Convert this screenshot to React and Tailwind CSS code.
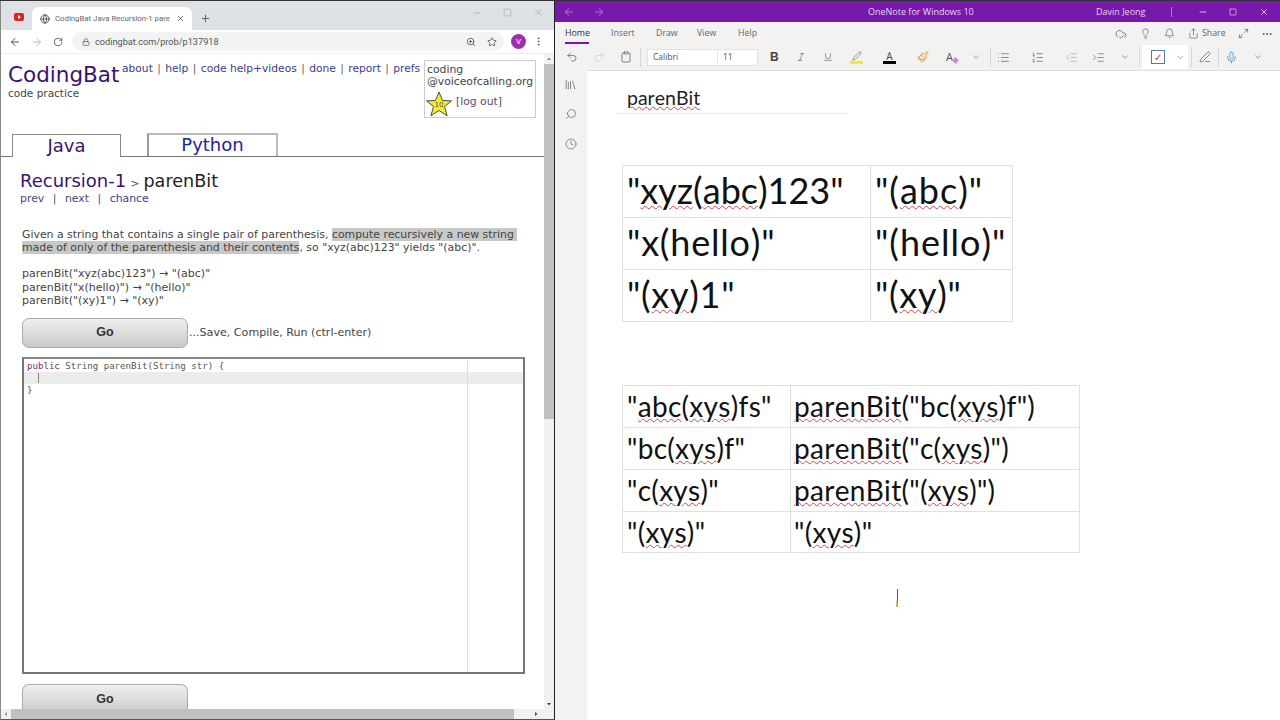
import React from "react";
import { ArrowLeft, ArrowRight, RotateCw, Lock, Search, ZoomIn, Star, MoreVertical, Plus, X, Minus, Square, Undo2, Redo2, Clipboard, Italic, Underline, Pen, Paintbrush, ChevronDown, List, ListOrdered, IndentDecrease, IndentIncrease, Mic, Library, Clock, Lightbulb, Bell, Share, Maximize2, MoreHorizontal, CloudCheck, PenLine, Globe } from "lucide-react";

const t = { strokeWidth: 1.4 };

const Sq = ({ children }) => (
  <span className="underline decoration-wavy decoration-[#d8404a] decoration-1 underline-offset-[1px]">{children}</span>
);

function Cell({ w, children }) {
  return <div className={`flex items-center h-full whitespace-nowrap border-r last:border-r-0 border-[#dedede] ${w}`}>{children}</div>;
}

function Table1() {
  const rows = [
    [<>"<Sq>xyz</Sq>(<Sq>abc</Sq>)123"</>, <>"(<Sq>abc</Sq>)"</>, "", "tracking-[1px]"],
    [<>"x(hello)"</>, <>"(hello)"</>, "tracking-[0.8px]", "tracking-[1px]"],
    [<>"(<Sq>xy</Sq>)1"</>, <>"(<Sq>xy</Sq>)"</>, "tracking-[0.7px]", "tracking-[0.7px]"],
  ];
  return (
    <div className="ml-[35px] mt-[51px] w-[391px] border border-[#e0e0e0] text-[36px] text-[#111] font-['Lato',sans-serif] [font-kerning:none]">
      {rows.map((r, i) => (
        <div key={i} className="flex h-[52px] border-b last:border-b-0 border-[#e0e0e0] last:h-[51px]">
          <Cell w={`w-[248px] pl-[4px] pb-[3px] ${r[2]}`}>{r[0]}</Cell>
          <Cell w={`flex-1 pl-[4px] pb-[3px] ${r[3]}`}>{r[1]}</Cell>
        </div>
      ))}
    </div>
  );
}

function Table2() {
  const rows = [
    [<>"<Sq>abc</Sq>(<Sq>xys</Sq>)fs"</>, <><Sq>parenBit</Sq>("bc(<Sq>xys</Sq>)f")</>],
    [<>"bc(<Sq>xys</Sq>)f"</>, <><Sq>parenBit</Sq>("c(<Sq>xys</Sq>)")</>],
    [<>"c(<Sq>xys</Sq>)"</>, <><Sq>parenBit</Sq>("(<Sq>xys</Sq>)")</>],
    [<>"(<Sq>xys</Sq>)"</>, <>"(<Sq>xys</Sq>)"</>],
  ];
  return (
    <div className="ml-[35px] mt-[63px] w-[458px] border border-[#e0e0e0] text-[28px] tracking-[0.3px] text-[#111] font-['Lato',sans-serif] [font-kerning:none]">
      {rows.map((r, i) => (
        <div key={i} className="flex h-[42px] border-b last:border-b-0 border-[#e0e0e0] last:h-[40px]">
          <Cell w="w-[168px] pl-[4px] pb-[1px]">{r[0]}</Cell>
          <Cell w="flex-1 pl-[3px] pb-[1px]">{r[1]}</Cell>
        </div>
      ))}
    </div>
  );
}

function Chrome() {
  return (
    <>
      <div className="flex items-end h-[29px] bg-[#dee1e6] shrink-0">
        <div className="w-[31px] h-[26px] flex items-center justify-center pl-[5px]">
          <svg width="10" height="8" viewBox="0 0 10 8"><rect width="10" height="8" rx="2" fill="#e52020" /><path d="M4 2l3 2-3 2z" fill="#fff" /></svg>
        </div>
        <div className="w-[160px] h-[23px] bg-white rounded-t-[7px] flex items-center pl-[8px] pr-[7px] text-[7.800px] text-[#666] font-['Roboto',sans-serif]">
          <Globe size={10} className="text-[#444] shrink-0" />
          <span className="ml-[5px] flex-1 whitespace-nowrap">CodingBat Java Recursion-1 pare</span>
          <X size={9} className="text-[#555] shrink-0" />
        </div>
        <div className="h-[23px] flex items-center ml-[8px]"><Plus size={11} className="text-[#555]" /></div>
        <div className="flex-1 self-start flex justify-end items-center gap-[21px] pr-[10px] pt-[6px] text-[#b0b0b0]">
          <Minus size={10} />
          <Square size={9} />
          <X size={11} />
        </div>
      </div>
      <div className="flex items-center h-[23px] bg-white shrink-0 pl-[8px] pr-[10px]">
        <ArrowLeft size={12} className="text-[#555]" />
        <ArrowRight size={12} className="ml-[10px] text-[#bbb]" />
        <RotateCw size={10} className="ml-[10px] text-[#555]" />
        <div className="ml-[9px] flex-1 h-[19px] rounded-full bg-[#f1f3f4] flex items-center pl-[10px] pr-[7px] text-[9.200px] text-[#555] font-['Roboto',sans-serif]">
          <Lock size={8} className="text-[#555]" />
          <span className="ml-[5px]">codingbat.com/prob/p137918</span>
          <ZoomIn size={10} className="ml-auto text-[#555]" />
          <Star size={10} className="ml-[11px] text-[#555]" />
        </div>
        <div className="ml-[7px] w-[15px] h-[15px] rounded-full bg-[#9c2fb0] text-white text-[8px] flex items-center justify-center font-['Roboto',sans-serif]">V</div>
        <MoreVertical size={11} className="ml-[7px] text-[#555]" />
      </div>
    </>
  );
}

function Go({ className = "", bottomCut = false }) {
  return (
    <div className={`w-[166px] h-[30px] shrink-0 rounded-[7px] border border-[#aaa] bg-gradient-to-b from-[#efefef] to-[#c9c9c9] flex items-center justify-center text-[#333] text-[12.5px] font-bold font-['Liberation_Sans',sans-serif] ${bottomCut ? "h-[24px] rounded-b-none border-b-0" : ""} ${className}`}>Go</div>
  );
}

function Page() {
  const link = "text-[#3c3a96]";
  return (
    <div className="flex-1 min-w-0 h-full overflow-hidden font-['DejaVu_Sans',sans-serif] text-[#333] bg-white">
      <div className="flex items-start pt-[6px] h-[76px]">
        <div className="pl-[7px] w-[121px] shrink-0 mt-[4px]">
          <div className="text-[21.500px] leading-[22px] text-[#3a1270] whitespace-nowrap">CodingBat</div>
          <div className="text-[10.5px] leading-[12px] mt-[1px] text-[#444]">code practice</div>
        </div>
        <div className={`text-[10.700px] leading-[13px] mt-[2px] whitespace-nowrap ${link} w-[302px] shrink-0`}>about <span className="text-[#666] mx-[1px]">|</span> help <span className="text-[#666] mx-[1px]">|</span> code help+videos <span className="text-[#666] mx-[1px]">|</span> done <span className="text-[#666] mx-[1px]">|</span> report <span className="text-[#666] mx-[1px]">|</span> prefs</div>
        <div className="w-[112px] h-[58px] border border-[#ccc] pl-[2px] pt-[3px] text-[10.800px] leading-[12px] text-[#444] shrink-0">
          <div>coding</div>
          <div>@voiceofcalling.org</div>
          <div className="flex items-center mt-[3px] -ml-[1px]">
            <svg width="26" height="26" viewBox="0 0 26 26"><path d="M13 1l3.5 8.5 9 .4-7 5.6 2.6 9.2L13 19.5 4.900 24.700l2.600-9.200-7-5.600 9-.4z" fill="#f2ee2e" stroke="#222" strokeWidth="0.8" /><text x="13" y="16" fontSize="7" textAnchor="middle" fill="#555" fontFamily="DejaVu Sans">10</text></svg>
            <span className="ml-[4px] text-[#5a4a7a] -mt-[5px]">[log out]</span>
          </div>
        </div>
      </div>
      <div className="flex items-end h-[27px] border-b border-[#777] pl-[11px]">
        <div className="w-[109px] h-[23px] -mb-px bg-white border border-b-0 border-[#888] text-center text-[18px] leading-[22px] text-[#3a1270]">Java</div>
        <div className="ml-[26px] w-[131px] h-[23px] border-2 border-b-0 border-[#bbb] border-l-[#999] text-center text-[18px] leading-[20px] text-[#2222a0]">Python</div>
      </div>
      <div className="pl-[19px] pt-[14px] text-[18px] leading-[20px] whitespace-nowrap">
        <span className="text-[#3a1270]">Recursion-1</span><span className="text-[11px] text-[#555] mx-[4px]">&gt;</span><span className="text-[#222] text-[17.600px]">parenBit</span>
      </div>
      <div className="pl-[19px] text-[10.900px] leading-[14px] -mt-[2px] text-[#4a4a80] whitespace-nowrap">prev <span className="mx-[5px]">|</span> next <span className="mx-[5px]">|</span> <span className="text-[#3c3a96]">chance</span></div>
      <div className="ml-[21px] mt-[22px] text-[10.900px] leading-[13px] text-[#444] whitespace-nowrap">
        <div>Given a string that contains a single pair of parenthesis, <span className="bg-[#c8c8c8]">compute recursively a new string&nbsp;</span></div>
        <div><span className="bg-[#c8c8c8]">made of only of the parenthesis and their contents</span>, so "xyz(abc)123" yields "(abc)".</div>
      </div>
      <div className="ml-[21px] mt-[13px] text-[11px] leading-[13.500px] text-[#444] whitespace-nowrap">
        <div>parenBit("xyz(abc)123") → "(abc)"</div>
        <div>parenBit("x(hello)") → "(hello)"</div>
        <div>parenBit("(xy)1") → "(xy)"</div>
      </div>
      <div className="flex items-center ml-[21px] mt-[10px] text-[11.100px] text-[#444] whitespace-nowrap">
        <Go />
        <span className="ml-px pt-px">...Save, Compile, Run (ctrl-enter)</span>
      </div>
      <div className="ml-[21px] mt-[9px] w-[503px] h-[317px] border-2 border-[#777] border-t-[#888] relative font-['DejaVu_Sans_Mono',monospace] text-[9.100px] leading-[12px] text-[#555] pt-[1px] bg-white">
        <div className="absolute left-[443px] top-0 bottom-0 w-px bg-[#ddd]" />
        <div className="pl-[3px]"><span className="text-[#7a2a6a]">public</span> String parenBit(String str) {"{"}</div>
        <div className="h-[12px] bg-[#ececec] pl-[14px] flex items-center"><span className="w-px h-[10px] bg-[#888]" /></div>
        <div className="pl-[3px]">{"}"}</div>
      </div>
      <Go className="ml-[21px] mt-[10px]" bottomCut />
    </div>
  );
}

function LeftWindow() {
  return (
    <div className="w-[555px] shrink-0 h-full flex flex-col border-l border-[#888] border-r border-r-[#222] border-b border-b-[#555] bg-white">
      <Chrome />
      <div className="h-px bg-[#eee] shrink-0" />
      <div className="flex-1 min-h-0 flex flex-col">
        <div className="flex-1 min-h-0 flex">
          <Page />
          <div className="w-[10px] shrink-0 bg-[#f1f1f1] flex flex-col items-center">
            <svg width="10" height="10" viewBox="0 0 10 10" className="shrink-0"><path d="M3 6l2-2.500L7 6z" fill="#888" /></svg>
            <div className="w-full h-[355px] bg-[#c0c0c0]" />
            <svg width="10" height="10" viewBox="0 0 10 10" className="mt-auto shrink-0"><path d="M3 4l2 2.500L7 4z" fill="#444" /></svg>
          </div>
        </div>
        <div className="h-[10px] shrink-0 bg-[#f1f1f1] flex items-center">
          <svg width="10" height="10" viewBox="0 0 10 10" className="shrink-0"><path d="M6 3L3.500 5 6 7z" fill="#999" /></svg>
          <div className="w-[503px] h-full bg-[#c0c0c0]" />
          <svg width="10" height="10" viewBox="0 0 10 10" className="ml-auto mr-[13px] shrink-0"><path d="M4 3l2.500 2L4 7z" fill="#444" /></svg>
        </div>
      </div>
    </div>
  );
}

function Ribbon() {
  const ic = "text-[#555] shrink-0";
  return (
    <div className="h-[49px] shrink-0 bg-[#f3f2f1] border-b border-[#e0dedc] font-['Open_Sans',sans-serif]">
      <div className="flex items-center h-[23px] pl-[10px] text-[8.800px] text-[#666]">
        <span className="w-[46px] h-[21px] flex items-center text-[#333] relative">Home<span className="absolute left-0 bottom-0 w-[24px] h-[2px] bg-[#7719aa]" /></span>
        <span className="w-[45px]">Insert</span>
        <span className="w-[41px]">Draw</span>
        <span className="w-[41px]">View</span>
        <span>Help</span>
        <div className="ml-auto flex items-center pr-[7px]">
          <CloudCheck size={12} {...t} className={ic} />
          <Lightbulb size={11} {...t} className={`${ic} ml-[13px]`} />
          <Bell size={11} {...t} className={`${ic} ml-[13px]`} />
          <Share size={11} {...t} className={`${ic} ml-[13px]`} />
          <span className="ml-[3px] w-[23px]">Share</span>
          <Maximize2 size={11} {...t} className={`${ic} ml-[13px]`} />
          <MoreHorizontal size={12} className={`${ic} ml-[12px]`} />
        </div>
      </div>
      <div className="flex items-center h-[24px] pl-[11px] text-[8.500px] text-[#555]">
        <Undo2 size={12} {...t} className={ic} />
        <Redo2 size={12} {...t} className="ml-[15px] text-[#ccc]" />
        <Clipboard size={12} {...t} className={`${ic} ml-[15px]`} />
        <div className="ml-[8px] w-px h-[20px] bg-[#d8d6d4]" />
        <div className="ml-[6px] w-[111px] h-[17px] bg-white border border-[#e4e2e0] flex items-center">
          <span className="w-[70px] pl-[5px] border-r border-[#e4e2e0] h-full flex items-center">Calibri</span>
          <span className="pl-[5px]">11</span>
        </div>
        <span className="ml-[12px] w-[9px] font-bold text-[12px] text-[#444] font-['Liberation_Sans',sans-serif]">B</span>
        <Italic size={10} {...t} className={`${ic} ml-[17px]`} />
        <Underline size={10} {...t} className={`${ic} ml-[17px]`} />
        <div className="ml-[17px] flex flex-col items-center w-[13px]"><Pen size={10} {...t} className={ic} /><span className="h-[3px] w-[13px] bg-[#f4ec2a]" /></div>
        <div className="ml-[20px] flex flex-col items-center w-[13px] text-[10px] leading-[10px]"><span className="text-[#444]">A</span><span className="h-[3px] w-[13px] bg-black" /></div>
        <Paintbrush size={12} className="ml-[21px] text-[#d89a3a] shrink-0" />
        <span className="ml-[17px] text-[11px] w-[8px] text-[#555] relative">A<span className="absolute -right-[4px] bottom-[2px] w-[5px] h-[5px] rotate-45 bg-[#c98ad8]" /></span>
        <ChevronDown size={10} {...t} className={`${ic} ml-[17px]`} />
        <div className="ml-[9px] w-px h-[20px] bg-[#d8d6d4]" />
        <List size={13} {...t} className="ml-[6px] text-[#3a7a9a] shrink-0" />
        <ListOrdered size={13} {...t} className="ml-[21px] text-[#3a7a9a] shrink-0" />
        <IndentDecrease size={13} {...t} className="ml-[21px] text-[#aaa] shrink-0" />
        <IndentIncrease size={13} {...t} className="ml-[14px] text-[#3a8a9a] shrink-0" />
        <ChevronDown size={10} {...t} className={`${ic} ml-[15px]`} />
        <div className="ml-[9px] w-px h-[20px] bg-[#d8d6d4]" />
        <div className="ml-[2px] w-[46px] h-[24px] bg-white flex items-center pl-[9px]">
          <span className="w-[14px] h-[14px] border border-[#5a7a9a] flex items-center justify-center text-[#d22] text-[10px] leading-none">✓</span>
          <ChevronDown size={9} {...t} className={`${ic} ml-[11px]`} />
        </div>
        <div className="ml-[3px] w-px h-[20px] bg-[#d8d6d4]" />
        <PenLine size={12} {...t} className="ml-[7px] text-[#2a6a9a] shrink-0" />
        <div className="ml-[7px] w-px h-[20px] bg-[#d8d6d4]" />
        <Mic size={13} {...t} className="ml-[6px] text-[#3a8ad8] shrink-0" />
        <ChevronDown size={10} {...t} className={`${ic} ml-[15px]`} />
      </div>
    </div>
  );
}

function RightWindow() {
  return (
    <div className="flex-1 min-w-0 h-full flex flex-col bg-white">
      <div className="h-[21px] shrink-0 bg-[#7719aa] flex items-center pl-[8px] text-[#e6d5ef] text-[9px] font-['Open_Sans',sans-serif] whitespace-nowrap">
        <ArrowLeft size={12} {...t} className="text-[#c9a0e0] shrink-0" />
        <ArrowRight size={12} {...t} className="ml-[18px] text-[#c9a0e0] shrink-0" />
        <span className="ml-[263px] w-[228px]">OneNote for Windows 10</span>
        <span className="w-[75px]">Davin Jeong</span>
        <div className="w-px h-[10px] bg-[#a57ac0] shrink-0" />
        <Minus size={10} className="ml-[26px] shrink-0" />
        <Square size={8} className="ml-[21px] shrink-0" />
        <X size={10} className="ml-[22px] shrink-0" />
      </div>
      <Ribbon />
      <div className="flex-1 min-h-0 flex -mt-px">
        <div className="w-[32px] shrink-0 bg-[#f3f2f1] flex flex-col items-center pt-[8px] pr-[1px] text-[#666]">
          <Library size={13} {...t} />
          <Search size={12} {...t} className="mt-[17px] -scale-x-100" />
          <Clock size={12} {...t} className="mt-[18px]" />
        </div>
        <div className="flex-1 min-w-0 flex flex-col">
          <div className="mt-[18px] ml-[40px] text-[19.500px] leading-[20px] text-[#222] font-['Lato',sans-serif] [font-kerning:none]"><Sq>parenBit</Sq></div>
          <div className="mt-[5px] ml-[30px] w-[231px] h-px bg-[#e8e8e8]" />
          <Table1 />
          <Table2 />
          <div className="ml-[307px] mt-[36px] text-[#444] w-[6px] flex flex-col items-center">
            <span className="w-px h-[12px] bg-[#555]" />
            <span className="text-[9px] leading-[7px] font-['Liberation_Sans',sans-serif]">I</span>
          </div>
        </div>
      </div>
    </div>
  );
}

export default function App() {
  return (
    <div className="w-[1280px] h-[720px] overflow-hidden flex flex-col bg-[#333]">
      <div className="h-px shrink-0 bg-[#333]" />
      <div className="flex-1 min-h-0 flex">
        <LeftWindow />
        <RightWindow />
      </div>
    </div>
  );
}
